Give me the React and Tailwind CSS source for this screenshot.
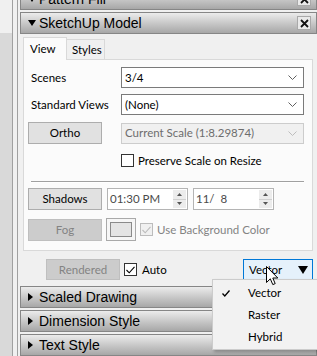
import React from 'react';

const Chevron = ({ disabled }) => (
  <svg width="9" height="5" viewBox="0 0 9 5" className="shrink-0">
    <path d="M0.5 0.5 L4.5 4.5 L8.5 0.5" fill="none" stroke={disabled ? '#bdbdbd' : '#606060'} strokeWidth="1" />
  </svg>
);

const Select = ({ value, disabled }) => (
  <div
    className={`flex-1 h-[21px] flex items-center justify-between pl-[3px] pr-[6px] border ${
      disabled ? 'border-[#cccccc] bg-[#f0f0f0] text-[#6d6d6d]' : 'border-[#7a7a7a] bg-white text-black'
    }`}
  >
    <span>{value}</span>
    <Chevron disabled={disabled} />
  </div>
);

const Button = ({ children, disabled }) => (
  <div
    className={`w-[74px] h-[22px] shrink-0 flex items-center justify-center border ${
      disabled ? 'border-[#bfbfbf] bg-[#cccccc] text-[#838383]' : 'border-[#adadad] bg-[#e1e1e1] text-black'
    }`}
  >
    {children}
  </div>
);

const Checkbox = ({ checked, disabled }) => (
  <div
    className={`w-[13px] h-[13px] shrink-0 border flex items-center justify-center ${
      disabled ? 'border-[#bcbcbc] bg-[#f0f0f0]' : 'border-[#333333] bg-white'
    }`}
  >
    {checked && (
      <svg width="9" height="8" viewBox="0 0 9 8">
        <path d="M0.5 4 L3.2 6.8 L8.5 0.8" fill="none" stroke={disabled ? '#bcbcbc' : '#000'} strokeWidth="1.1" />
      </svg>
    )}
  </div>
);

const Spinner = () => (
  <div className="w-[13px] h-[18px] flex flex-col bg-[#ececec]">
    <div className="flex-1 flex items-center justify-center border-b border-[#d0d0d0]">
      <svg width="5" height="3" viewBox="0 0 5 3"><path d="M0 3 L2.5 0 L5 3 Z" fill="#555" /></svg>
    </div>
    <div className="flex-1 flex items-center justify-center">
      <svg width="5" height="3" viewBox="0 0 5 3"><path d="M0 0 L2.5 3 L5 0 Z" fill="#555" /></svg>
    </div>
  </div>
);

const SpinInput = ({ value }) => (
  <div className="w-[81px] h-[22px] shrink-0 border border-[#b4b4b4] bg-white flex items-center justify-between pl-[2px] pr-[1px] text-[#4a4a4a]">
    <span className="whitespace-pre">{value}</span>
    <Spinner />
  </div>
);

const CloseButton = () => (
  <div className="w-[14px] h-[14px] ml-auto border border-[#a9a9a9] bg-[#e9e9e9] flex items-center justify-center">
    <svg width="9" height="9" viewBox="0 0 9 9">
      <path d="M1 1 L8 8 M8 1 L1 8" stroke="#111" strokeWidth="1.8" />
    </svg>
  </div>
);

const Header = ({ title, open, close, className = '' }) => (
  <div
    className={`h-[22px] shrink-0 flex items-center border border-[#868686] bg-linear-to-b from-[#ececec] to-[#a7a7a7] pl-[7px] pr-[5px] ${className}`}
  >
    {open ? (
      <svg width="8" height="6" viewBox="0 0 8 6" className="shrink-0">
        <path d="M0 0 L8 0 L4 6 Z" fill="#000" />
      </svg>
    ) : (
      <svg width="5" height="8" viewBox="0 0 5 8" className="shrink-0">
        <path d="M0 0 L5 4 L0 8 Z" fill="#000" />
      </svg>
    )}
    <span className={`${open ? 'ml-[3px]' : 'ml-[6px]'} text-[14px] leading-none text-black font-['Liberation_Sans',Arial,sans-serif]`}>
      {title}
    </span>
    {close && <CloseButton />}
  </div>
);

const Cursor = () => (
  <svg width="13" height="20" viewBox="0 0 13 20" className="absolute left-[266px] top-[266px]">
    <path d="M0.5 0.5 L0.5 16.5 L4.3 12.8 L6.8 18.6 L9.2 17.6 L6.8 12 L11.8 12 Z" fill="#fff" stroke="#000" strokeWidth="1" />
  </svg>
);

const Menu = () => (
  <div className="absolute left-[212px] top-[279px] w-[110px] border border-[#cccccc] bg-[#f2f2f2] shadow-[2px_2px_3px_rgba(0,0,0,0.25)] pt-[2px] pb-[1px]">
    {['Vector', 'Raster', 'Hybrid'].map((item, i) => (
      <div key={item} className="h-[22px] flex items-center">
        <div className="w-[35px] pl-[9px] flex items-center">
          {i === 0 && (
            <svg width="8" height="7" viewBox="0 0 8 7">
              <path d="M0.5 3.5 L2.8 6 L7.5 0.5" fill="none" stroke="#000" strokeWidth="1.3" />
            </svg>
          )}
        </div>
        <span>{item}</span>
      </div>
    ))}
  </div>
);

export default function App() {
  return (
    <div className="relative w-[317px] h-[356px] overflow-hidden flex bg-[#f0f0f0] text-[11.5px] leading-none text-black font-['Lato',sans-serif]">
      <div className="w-[12px] flex flex-col">
        <div className="h-[33px] bg-[#f0f0f0]" />
        <div className="flex-1 bg-[#d9d9d9]" />
      </div>
      <div className="w-[6px] border-l border-r border-[#a0a0a0]" />
      <div className="w-[2px]" />

      <div className="flex-1 flex flex-col min-w-0">
        <Header title="Pattern Fill" open close className="-mt-[12px]" />
        <Header title="SketchUp Model" open close className="mt-[2px] h-[21px]" />

        <div className="pl-[3px] pr-[4px] pt-[2px]">
          <div className="flex items-end h-[23px]">
            <div className="relative z-10 -mb-px w-[44px] h-[23px] bg-[#fbfbfb] border border-b-0 border-[#d9d9d9] pl-[6px] pt-[5px]">
              View
            </div>
            <div className="w-[38px] h-[20px] bg-[#f0f0f0] border border-l-0 border-b-0 border-[#d9d9d9] pl-[5px] pt-[4px]">
              Styles
            </div>
          </div>

          <div className="h-[192px] border border-[#d9d9d9] bg-[#fbfbfb] pl-[4px] pr-[8px] pt-[7px] flex flex-col">
            <div className="h-[21px] flex items-center">
              <div className="w-[93px] pl-[3px]">Scenes</div>
              <Select value="3/4" />
            </div>
            <div className="h-[21px] mt-[6px] flex items-center">
              <div className="w-[93px] pl-[3px]">Standard Views</div>
              <Select value="(None)" />
            </div>
            <div className="h-[22px] mt-[7px] flex items-center">
              <div className="w-[93px]">
                <Button>Ortho</Button>
              </div>
              <Select value="Current Scale (1:8.29874)" disabled />
            </div>
            <div className="h-[13px] mt-[10px] flex items-center pl-[93px] gap-[4px]">
              <Checkbox />
              <span>Preserve Scale on Resize</span>
            </div>
            <div className="mt-[14px] ml-[3px] border-t border-b border-t-[#a0a0a0] border-b-white" />
            <div className="h-[22px] mt-[5px] flex items-center">
              <Button>Shadows</Button>
              <div className="ml-[5px]">
                <SpinInput value="01:30 PM" />
              </div>
              <div className="ml-[5px]">
                <SpinInput value="11/  8" />
              </div>
            </div>
            <div className="h-[23px] mt-[8px] flex items-center">
              <Button disabled>Fog</Button>
              <div className="ml-[4px] w-[30px] h-[23px] border border-[#a9a9a9] bg-[#f6f6f6] p-[3px]">
                <div className="w-full h-full border border-[#8a8a8a] bg-[#e4e4e4]" />
              </div>
              <div className="ml-[4px] flex items-center gap-[4px] text-[#838383]">
                <Checkbox checked disabled />
                <span>Use Background Color</span>
              </div>
            </div>
          </div>
        </div>

        <div className="h-[21px] mt-[8px] flex items-center pl-[26px] pr-[4px]">
          <div className="w-[74px] h-[21px] flex items-center justify-center border border-[#bfbfbf] bg-[#cccccc] text-[#838383]">
            Rendered
          </div>
          <div className="ml-[4px]">
            <Checkbox checked />
          </div>
          <span className="ml-[5px]">Auto</span>
          <div className="ml-auto w-[70px] h-[21px] flex items-center justify-between border border-[#0078d7] bg-[#e5f1fb] pl-[5px] pr-[4px]">
            <span>Vector</span>
            <svg width="10" height="8" viewBox="0 0 10 8">
              <path d="M0 0 L10 0 L5 8 Z" fill="#000" />
            </svg>
          </div>
        </div>

        <div className="mt-auto flex flex-col gap-[2px]">
          <Header title="Scaled Drawing" />
          <Header title="Dimension Style" className="h-[21px]" />
          <Header title="Text Style" className="h-[21px]" />
        </div>
      </div>

      <Menu />
      <Cursor />
    </div>
  );
}
